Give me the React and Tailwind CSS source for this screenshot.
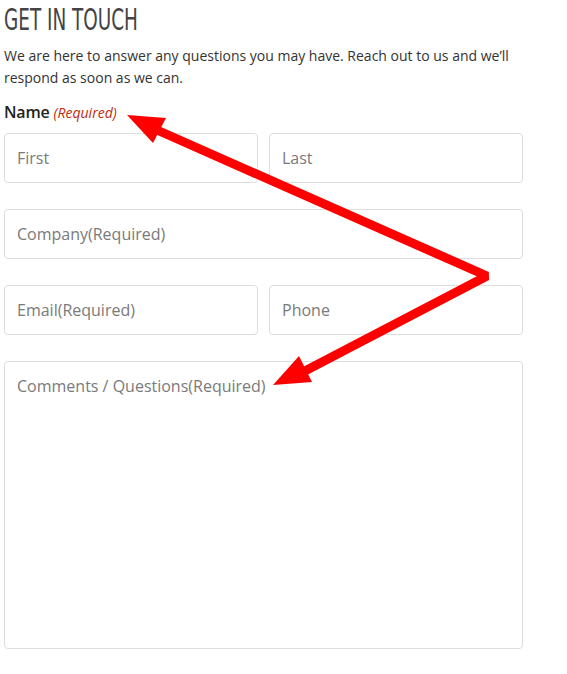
import React from 'react'

const inputCls =
    "w-full h-[50px] rounded-[4px] border border-[#dddddd] bg-white px-[12px] text-[16px] text-[#333] placeholder:text-[#7a7a7a] outline-none"

function App() {
    return (
        <div className="relative w-[567px] h-[674px] bg-white" style={{ fontFamily: '"Open Sans", sans-serif' }}>
            <div className="pl-[4px] w-[523px]">
                {/* Heading */}
                <h1
                    className="pt-[1px] h-[36px] text-[31px] leading-[36px] text-[#444] origin-left scale-x-[0.66] whitespace-nowrap"
                    style={{ fontFamily: '"Liberation Sans Narrow", "DejaVu Sans Condensed", sans-serif' }}
                >
                    GET IN TOUCH
                </h1>
                <p className="mt-[9px] text-[14px] leading-[22px] text-[#333] pr-[4px]">
                    We are here to answer any questions you may have. Reach out to us and we’ll respond as soon as we can.
                </p>

                {/* Form */}
                <div className="mt-[12px] flex items-baseline gap-[4px]">
                    <span className="text-[16px] font-semibold text-[#222] leading-[22px] tracking-[-0.2px]">Name</span>
                    <span className="text-[14px] italic text-[#c02b0a]">(Required)</span>
                </div>
                <div className="mt-[10px] flex gap-[11px]">
                    <input className={inputCls} placeholder="First" />
                    <input className={inputCls} placeholder="Last" />
                </div>
                <div className="mt-[26px]">
                    <input className={inputCls} placeholder="Company(Required)" />
                </div>
                <div className="mt-[26px] flex gap-[11px]">
                    <input className={inputCls} placeholder="Email(Required)" />
                    <input className={inputCls} placeholder="Phone" />
                </div>
                <div className="mt-[26px]">
                    <textarea
                        className="block w-full h-[288px] resize-none rounded-[4px] border border-[#dddddd] bg-white px-[12px] py-[12px] text-[16px] leading-[24px] text-[#333] placeholder:text-[#7a7a7a] outline-none"
                        placeholder="Comments / Questions(Required)"
                    />
                </div>
            </div>

            {/* Annotation arrows */}
            <svg className="absolute inset-0 pointer-events-none" width="567" height="674" viewBox="0 0 567 674">
                <polyline
                    points="157,130 487,276 303,372"
                    fill="none"
                    stroke="#ff0000"
                    strokeWidth="9"
                    strokeLinejoin="bevel"
                />
                <polygon points="127,115 166,118 153,143" fill="#ff0000" />
                <polygon points="273,385 299,356 312,382" fill="#ff0000" />
            </svg>
        </div>
    )
}

export default App
